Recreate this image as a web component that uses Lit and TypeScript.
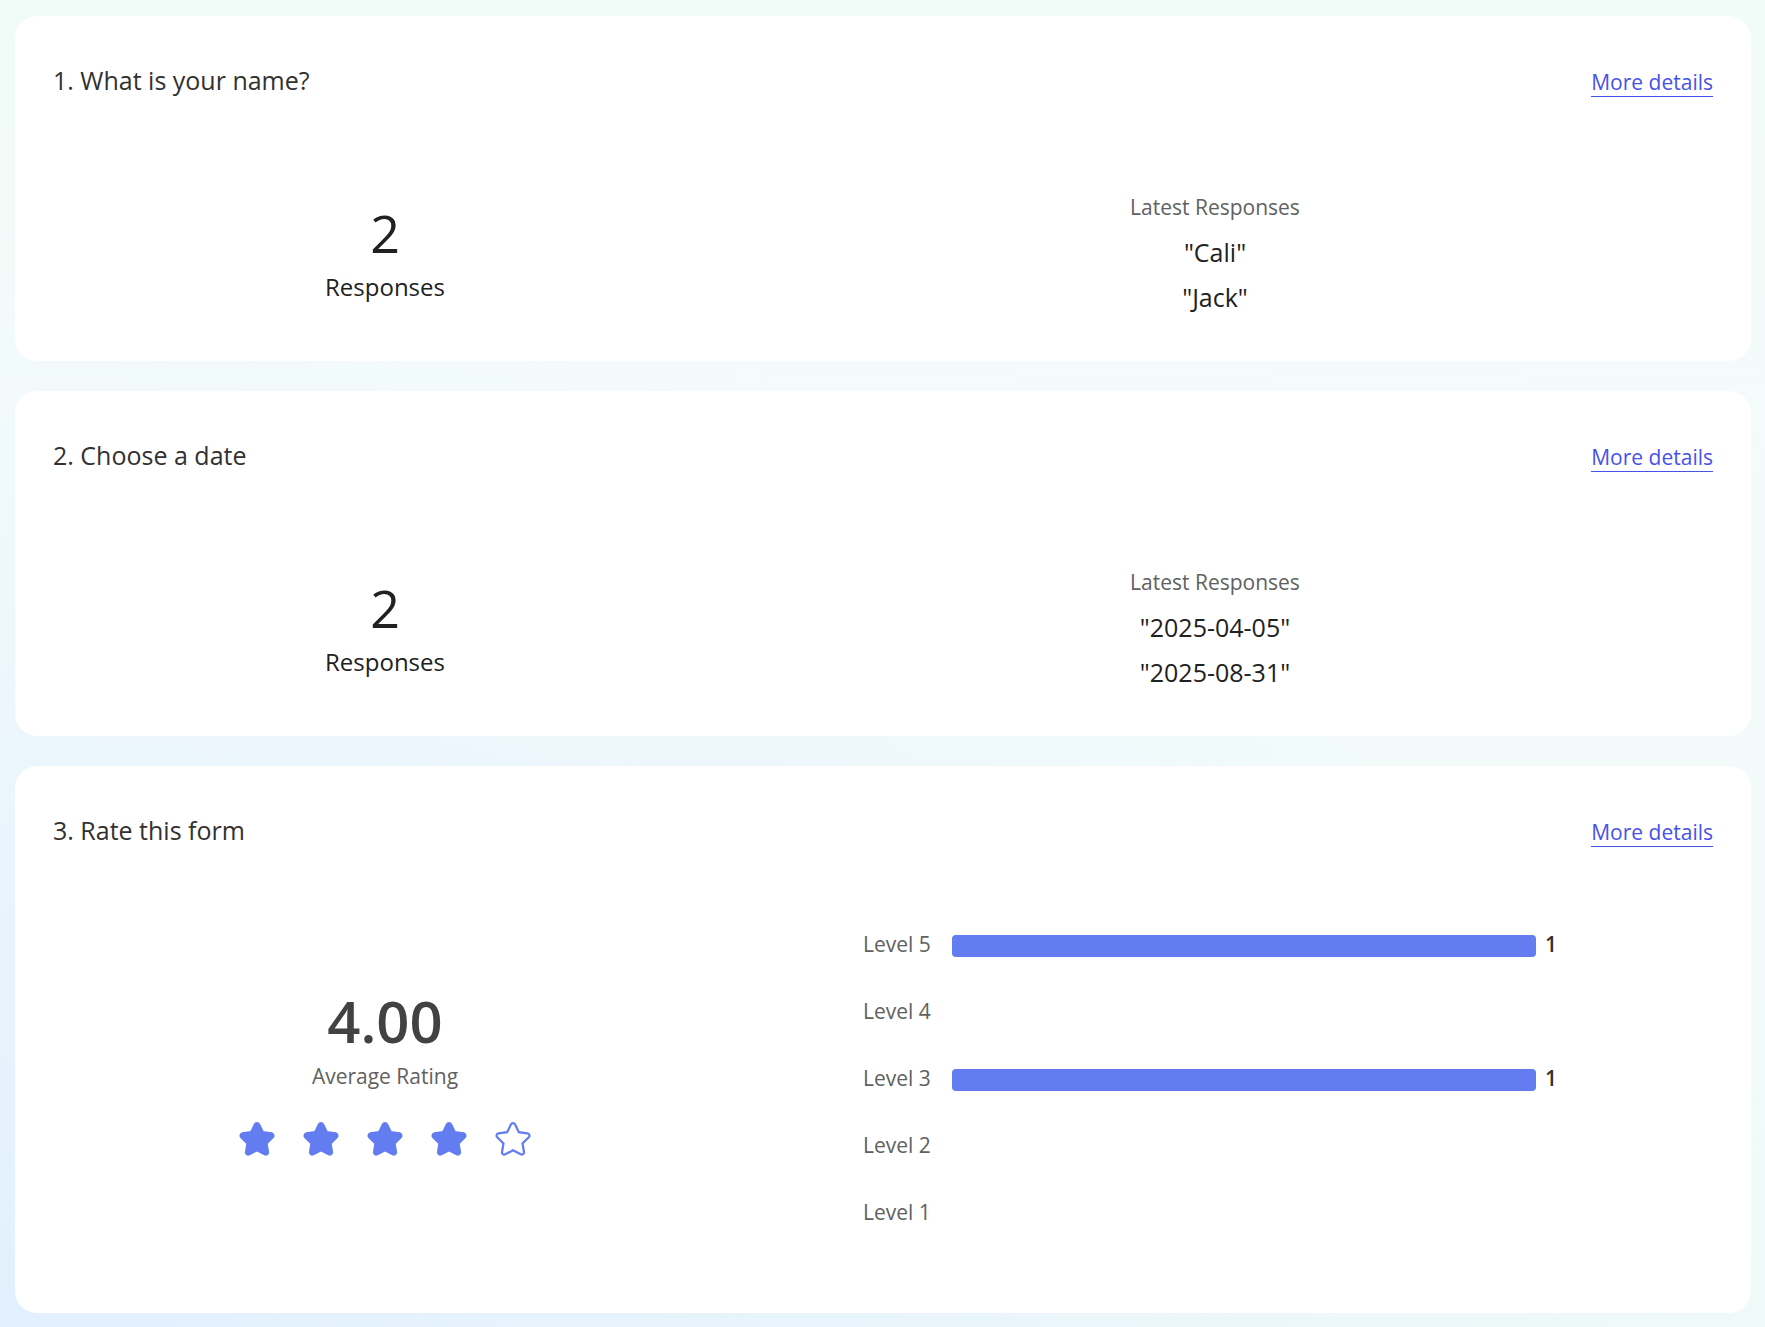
import { LitElement, html, css } from "lit";
import { customElement, property } from "lit/decorators.js";
import { classMap } from "lit/directives/class-map.js";

const STAR =
  "M10.79 3.1c.5-1 1.92-1 2.42 0l2.36 4.78 5.27.77c1.1.16 1.55 1.52.75 2.3l-3.82 3.72.9 5.25a1.35 1.35 0 0 1-1.96 1.42L12 18.86l-4.72 2.48a1.35 1.35 0 0 1-1.96-1.42l.9-5.25-3.81-3.72c-.8-.78-.36-2.14.75-2.3l5.27-.77 2.36-4.78Z";

@customElement("question-card")
export class QuestionCard extends LitElement {
  @property({ type: Number }) number = 0;
  @property() heading = "";

  static styles = css`
    :host {
      display: block;
      background: #fff;
      border-radius: 22px;
      padding: 47px 38px 41px;
    }
    .head {
      display: flex;
      justify-content: space-between;
      align-items: baseline;
      line-height: 34px;
    }
    .title {
      margin: 0;
      font-size: 25px;
      font-weight: 400;
      color: #323130;
    }
    .more {
      font-size: 21px;
      line-height: 28px;
      color: #4752e8;
      text-decoration: none;
      border-bottom: 1px solid currentColor;
    }
    .body {
      display: grid;
      grid-template-columns: 2fr 3fr;
      align-items: start;
    }
  `;

  render() {
    return html`
      <header class="head">
        <h2 class="title">${this.number}. ${this.heading}</h2>
        <a class="more" href="#question-${this.number}">More details</a>
      </header>
      <div class="body"><slot></slot></div>
    `;
  }
}

@customElement("text-summary")
export class TextSummary extends LitElement {
  @property({ type: Number }) count = 0;
  @property({ attribute: false }) latest: string[] = [];

  static styles = css`
    :host {
      display: contents;
    }
    .total,
    .latest {
      text-align: center;
      color: #212121;
      font-size: 25px;
    }
    .total {
      padding-top: 103px;
    }
    .count {
      font-size: 52px;
      line-height: 66px;
    }
    .label {
      font-size: 24px;
      line-height: 42px;
    }
    .latest {
      padding-top: 87px;
    }
    .caption {
      font-size: 21px;
      line-height: 46px;
      color: #616161;
    }
    .list {
      margin: 0;
      padding: 0;
      list-style: none;
      line-height: 45px;
    }
  `;

  render() {
    return html`
      <div class="total">
        <div class="count">${this.count}</div>
        <div class="label">Responses</div>
      </div>
      <div class="latest">
        <div class="caption">Latest Responses</div>
        <ul class="list">
          ${this.latest.map((text) => html`<li>"${text}"</li>`)}
        </ul>
      </div>
    `;
  }
}

@customElement("rating-summary")
export class RatingSummary extends LitElement {
  @property({ attribute: false }) levels: number[] = [];

  static styles = css`
    :host {
      display: contents;
    }
    .score {
      text-align: center;
      padding-top: 140px;
    }
    .average {
      font-size: 58px;
      font-weight: 600;
      line-height: 68px;
      color: #424242;
    }
    .caption {
      font-size: 21px;
      line-height: 42px;
      color: #616161;
    }
    .stars {
      display: flex;
      justify-content: center;
      gap: 22px;
      padding-top: 21px;
    }
    .star {
      width: 42px;
      height: 42px;
      fill: none;
      stroke: #637cef;
      stroke-width: 1.35;
    }
    .star.full {
      fill: #637cef;
    }
    .chart {
      display: grid;
      grid-template-columns: auto 1fr auto;
      column-gap: 21px;
      grid-auto-rows: 67px;
      align-items: center;
      padding: 65px 156px 25px 146px;
      font-size: 21px;
    }
    .level,
    .votes {
      padding-bottom: 4px;
    }
    .level {
      color: #616161;
    }
    .track {
      height: 22px;
    }
    .bar {
      height: 100%;
      border-radius: 4px;
      background: #637cef;
    }
    .votes {
      width: 12px;
      margin-left: -12px;
      font-weight: 600;
      color: #323130;
    }
  `;

  render() {
    const most = Math.max(...this.levels, 1);
    const votes = this.levels.reduce((a, b) => a + b, 0);
    const sum = this.levels.reduce((a, n, i) => a + n * (i + 1), 0);
    const average = votes ? sum / votes : 0;
    return html`
      <div class="score">
        <div class="average">${average.toFixed(2)}</div>
        <div class="caption">Average Rating</div>
        <div class="stars" role="img" aria-label="${average} of 5 stars">
          ${this.levels.map(
            (_, i) => html`<svg
              class=${classMap({ star: true, full: i < Math.round(average) })}
              viewBox="0 0 24 24"
            >
              <path transform="translate(.72 .71) scale(.94)" d=${STAR}></path>
            </svg>`
          )}
        </div>
      </div>
      <div class="chart">
        ${this.levels
          .map((n, i) => ({ n, level: i + 1 }))
          .reverse()
          .map(
            ({ n, level }) => html`
              <span class="level">Level ${level}</span>
              <div class="track">
                <div class="bar" style="width:${(n / most) * 100}%"></div>
              </div>
              <span class="votes">${n || ""}</span>
            `
          )}
      </div>
    `;
  }
}

@customElement("app-root")
export class AppRoot extends LitElement {
  static styles = css`
    :host {
      display: block;
      box-sizing: border-box;
      min-height: 100vh;
      padding: 16px 14px 13px 15px;
      font-family: "Segoe UI", "Open Sans", "Noto Sans", sans-serif;
      background:
        radial-gradient(ellipse 100% 80% at 0% 100%, #e2f0ff, rgba(226, 240, 255, 0)),
        linear-gradient(180deg, #f1fbf7, #f4fbfb 30%, #f3fbfa 60%, #effaf8);
    }
    .page {
      display: flex;
      flex-direction: column;
      gap: 30px;
    }
  `;

  render() {
    return html`
      <main class="page">
        <question-card number="1" heading="What is your name?">
          <text-summary .count=${2} .latest=${["Cali", "Jack"]}></text-summary>
        </question-card>
        <question-card number="2" heading="Choose a date">
          <text-summary .count=${2} .latest=${["2025-04-05", "2025-08-31"]}></text-summary>
        </question-card>
        <question-card number="3" heading="Rate this form">
          <rating-summary .levels=${[0, 0, 1, 0, 1]}></rating-summary>
        </question-card>
      </main>
    `;
  }
}
